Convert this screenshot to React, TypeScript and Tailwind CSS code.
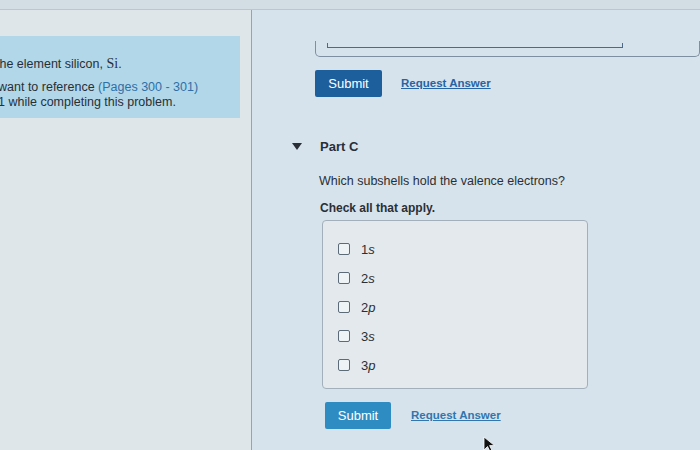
function Checkbox() {
  return <span className="inline-block h-[12px] w-[12px] rounded-[2px] border border-[#5d6b78] bg-[#eef3f6]" />;
}

const options = [
  { n: "1", l: "s" },
  { n: "2", l: "s" },
  { n: "2", l: "p" },
  { n: "3", l: "s" },
  { n: "3", l: "p" },
];

export default function App() {
  return (
    <div
      className="relative h-[450px] w-[700px] overflow-hidden bg-[#dfe6ea] text-[#2a2f36]"
      style={{ fontFamily: '"Liberation Sans", Arial, sans-serif' }}
    >
      <div className="h-[10px] border-b border-[#b9c7d2] bg-[#d3dde4]" />
      <div className="flex h-[440px]">
        {/* left column */}
        <div className="w-[252px] shrink-0 border-r border-[#8fa6b8] pt-[26px]">
          <div className="h-[82px] w-[240px] overflow-hidden bg-[#b2d7e8] pt-[17px] text-[12.5px]">
            <p className="-ml-[4px] whitespace-nowrap">
              the element silicon,{" "}
              <span className="text-[14px]" style={{ fontFamily: '"Liberation Serif", serif' }}>
                Si
              </span>
              .
            </p>
            <p className="-ml-[2px] mt-[6px] whitespace-nowrap leading-[15px]">
              want to reference <span className="text-[#2f6fa8]">(Pages 300 - 301)</span>
            </p>
            <p className="-ml-[2px] whitespace-nowrap leading-[15px]">1 while completing this problem.</p>
          </div>
        </div>

        {/* right column */}
        <div className="flex-1 bg-[#d6e3ec]">
          <div className="ml-[63px] mt-[31px] flex h-[16px] items-end rounded-b-[5px] border-x border-b border-[#7d8fa0] px-[11px] pb-[8px]">
            <div className="h-[5px] w-[296px] border-x border-b border-[#4f6a85]" />
          </div>

          <div className="ml-[63px] mt-[13px] flex items-center gap-[19px]">
            <button className="h-[27px] w-[67px] rounded-[2px] bg-[#1d5f9c] text-[13px] text-white">Submit</button>
            <a className="text-[11.5px] font-bold text-[#2764a3] underline">Request Answer</a>
          </div>

          <div className="mt-[40px] flex items-center">
            <svg width="10" height="7" viewBox="0 0 10 7" className="ml-[40px]">
              <path d="M0 0 L10 0 L5 7 Z" fill="#2a2f36" />
            </svg>
            <span className="ml-[18px] text-[13px] font-bold">Part C</span>
          </div>

          <p className="ml-[67px] mt-[15px] text-[12.5px]">Which subshells hold the valence electrons?</p>
          <p className="ml-[68px] mt-[9px] text-[12px] font-bold">Check all that apply.</p>

          <div className="ml-[70px] mt-[3px] flex h-[169px] w-[266px] flex-col gap-[11px] rounded-[4px] border border-[#a3b0bb] bg-[#e3e9ed] pl-[15px] pt-[19px]">
            {options.map((o, i) => (
              <label key={i} className="flex h-[18px] items-center gap-[11px] text-[13px]">
                <Checkbox />
                <span>
                  {o.n}
                  <i>{o.l}</i>
                </span>
              </label>
            ))}
          </div>

          <div className="ml-[73px] mt-[13px] flex items-center gap-[20px]">
            <button className="h-[27px] w-[66px] rounded-[2px] bg-[#2f8cc2] text-[13px] font-medium text-white">
              Submit
            </button>
            <a className="text-[11.5px] font-bold text-[#3176ad] underline">Request Answer</a>
          </div>
        </div>
      </div>

      {/* mouse pointer */}
      <svg width="14" height="16" viewBox="0 0 14 16" className="absolute left-[483px] top-[436px]">
        <path d="M1 1 L1 14 L4.5 10.5 L7 15.5 L9 14.5 L6.6 9.6 L11.5 9.6 Z" fill="#111" stroke="#fff" strokeWidth="0.8" />
      </svg>
    </div>
  );
}
